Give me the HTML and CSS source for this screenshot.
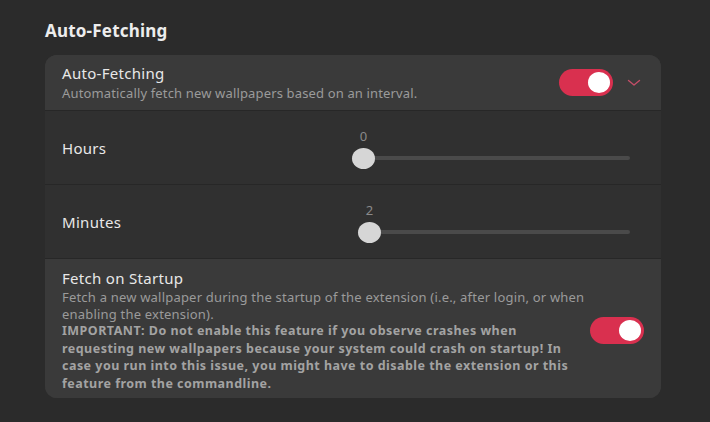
FILE: index.html
```html
<!DOCTYPE html>
<html>
<head>
<meta charset="utf-8">
<link rel="stylesheet" href="styles.css">
</head>
<body>
<div class="page">
  <h2 class="group-title">Auto-Fetching</h2>
  <div class="card">
    <div class="row row-header">
      <div class="row-text">
        <div class="row-title">Auto-Fetching</div>
        <div class="row-sub">Automatically fetch new wallpapers based on an interval.</div>
      </div>
      <div class="switch"><div class="knob"></div></div>
      <svg class="chevron" width="14" height="8" viewBox="0 0 14 8"><path d="M1.5 1.5 L7 6 L12.5 1.5" fill="none" stroke="#c24d67" stroke-width="1.4" stroke-linecap="round" stroke-linejoin="round"/></svg>
    </div>
    <div class="row row-inner">
      <div class="row-title">Hours</div>
      <div class="slider">
        <div class="track"></div>
        <div class="thumb" style="left: 0px"><span class="value">0</span></div>
      </div>
    </div>
    <div class="row row-inner">
      <div class="row-title">Minutes</div>
      <div class="slider">
        <div class="track"></div>
        <div class="thumb" style="left: 6px"><span class="value">2</span></div>
      </div>
    </div>
    <div class="row row-startup">
      <div class="row-text">
        <div class="row-title">Fetch on Startup</div>
        <div class="row-sub long">Fetch a new wallpaper during the startup of the extension (i.e., after login, or when enabling the extension).<br><b>IMPORTANT: Do not enable this feature if you observe crashes when requesting new wallpapers because your system could crash on startup! In case you run into this issue, you might have to disable the extension or this feature from the commandline.</b></div>
      </div>
      <div class="switch"><div class="knob"></div></div>
    </div>
  </div>
</div>
</body>
</html>
```

FILE: styles.css
```css
html, body {
  margin: 0;
  padding: 0;
  background: #2b2b2b;
  font-family: "Noto Sans", "Open Sans", sans-serif;
  color: #e6e6e6;
}

.page {
  padding: 19px 49px 0 45px;
}

.group-title {
  margin: 0 0 12px 0;
  font-size: 17px;
  font-weight: bold;
  line-height: 24px;
  letter-spacing: 0.2px;
  color: #ededed;
}

.card {
  border-radius: 12px;
  overflow: hidden;
  background: #3a3a3a;
  display: flex;
  flex-direction: column;
}

.row {
  display: flex;
  align-items: center;
  padding: 0 17px 0 17px;
}

.row-header {
  height: 55px;
  background: #3a3a3a;
  border-bottom: 1px solid #272727;
}

.row-text {
  flex: 1;
  display: flex;
  flex-direction: column;
}

.row-title {
  font-size: 15px;
  line-height: 20px;
  letter-spacing: 0.3px;
  color: #e8e8e8;
}

.row-sub {
  font-size: 13px;
  line-height: 17px;
  letter-spacing: 0.15px;
  color: #9b9b9b;
  margin-top: 2px;
}

.switch {
  width: 54px;
  height: 27px;
  border-radius: 14px;
  background: #d9304f;
  position: relative;
  flex: none;
}

.switch .knob {
  position: absolute;
  right: 3px;
  top: 3px;
  width: 22px;
  height: 21px;
  border-radius: 50%;
  background: #ffffff;
}

.chevron {
  margin-left: 14px;
  margin-right: 3px;
  flex: none;
}

.row-inner {
  height: 73px;
  background: #303030;
  border-bottom: 1px solid #272727;
}

.row-inner .row-title {
  flex: 1;
}

.slider {
  width: 267px;
  height: 73px;
  position: relative;
  margin-right: 14px;
}

.track {
  position: absolute;
  left: 0;
  right: 0;
  top: 45px;
  height: 4px;
  border-radius: 2px;
  background: #4a4a4a;
}

.thumb {
  position: absolute;
  top: 37px;
  width: 23px;
  height: 21px;
  border-radius: 50%;
  background: #d6d6d6;
  margin-left: -11px;
}

.thumb .value {
  position: absolute;
  left: 0;
  right: 0;
  top: -20px;
  text-align: center;
  font-size: 13px;
  line-height: 16px;
  color: #8a8a8a;
}

.row-startup {
  background: #3a3a3a;
  padding-top: 9px;
  padding-bottom: 6px;
}

.row-startup .row-text {
  max-width: 528px;
  margin-right: auto;
}

.row-startup .row-sub {
  line-height: 16.5px;
  margin-top: 1px;
  letter-spacing: 0.2px;
}

.row-startup .row-sub b {
  font-size: 12.5px;
  letter-spacing: 0.47px;
  color: #a3a3a3;
}
```
